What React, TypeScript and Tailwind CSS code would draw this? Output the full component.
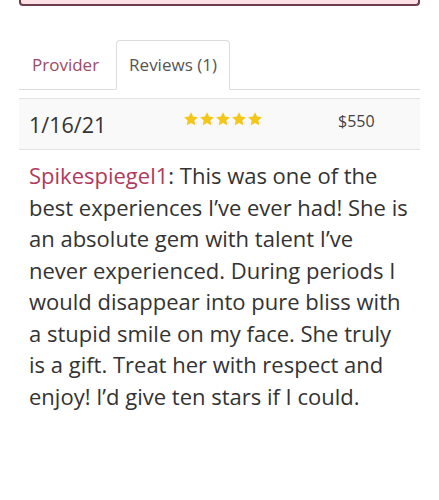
import React from 'react';

function Star() {
  return (
    <svg viewBox="0 0 24 24" className="h-[16px] w-[16px]" fill="#f5c518">
      <path d="M12 1.8l3.1 6.6 7.2.9-5.3 5 1.4 7.1L12 17.9l-6.4 3.5 1.4-7.1-5.3-5 7.2-.9z" />
    </svg>
  );
}

export default function App() {
  return (
    <div className="min-h-[500px] bg-white px-[19px] font-['Open_Sans',sans-serif]">
      {/* alert box cut off at top */}
      <div className="h-[6px] rounded-b-[4px] border-x-2 border-b-2 border-[#6d3d4d] bg-[#fde1e7]" />

      {/* tabs */}
      <div className="mt-[34px] flex border-b border-[#dddddd]">
        <div className="flex h-[49px] items-center pl-[13px] pr-[17px] text-[17px] text-[#9b4b66]">Provider</div>
        <div className="-mb-px flex h-[50px] items-center rounded-t-[4px] border border-b-white border-[#dddddd] bg-white px-[12px] text-[17px] text-[#555555]">
          Reviews (1)
        </div>
      </div>

      {/* review row */}
      <div className="mt-[8px] flex h-[52px] border-y border-[#e3e3e3] bg-[#f9f9f9]">
        <div className="flex w-[164px] items-center pl-[10px] pt-[2px] text-[21.5px] text-[#333333]">1/16/21</div>
        <div className="flex w-[155px] items-start pt-[12px]">
          <Star />
          <Star />
          <Star />
          <Star />
          <Star />
        </div>
        <div className="pt-[10px] text-[16px] text-[#444444]">$550</div>
      </div>

      <p className="pl-[10px] pr-[10px] pt-[10px] text-[22px] leading-[31.5px] text-[#333333]">
        <span className="text-[#b03a5e]">Spikespiegel1</span>: This was one of the best experiences I’ve ever had! She is an absolute gem with talent I’ve never experienced. During periods I would disappear into pure bliss with a stupid smile on my face. She truly is a gift. Treat her with respect and enjoy! I’d give ten stars if I could.
      </p>
    </div>
  );
}
